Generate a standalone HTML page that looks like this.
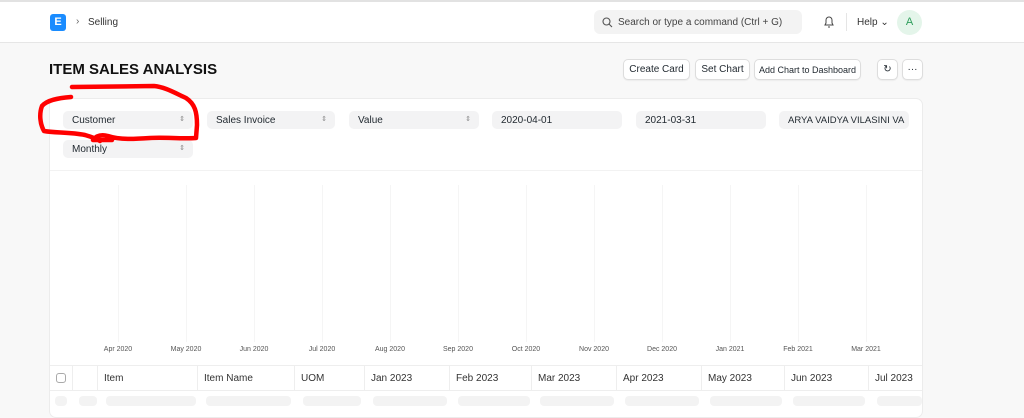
<!DOCTYPE html>
<html><head><style>
*{box-sizing:border-box;margin:0;padding:0}
body{width:1024px;height:403px;overflow:hidden;background:#f8f8f8;font-family:"Liberation Sans",sans-serif;color:#1f272e;position:relative}
.top{position:absolute;left:0;top:0;width:1024px;height:43px;background:#fff;border-top:2px solid #e2e2e2;border-bottom:1px solid #e6e6e6}
.abs{position:absolute;white-space:nowrap}
.btn{position:absolute;top:59px;height:21px;background:#fff;border:1px solid #ddd;border-radius:5px;font-size:10px;line-height:20px;text-align:center;white-space:nowrap;overflow:hidden;box-shadow:0 1px 1px rgba(0,0,0,.05)}
.card{position:absolute;left:49px;top:98px;width:874px;height:320px;background:#fff;border:1px solid #ececec;border-radius:7px}
.f{position:absolute;height:18px;background:#f3f3f4;border-radius:5px;font-size:10px;line-height:20px;padding-left:9px;color:#1f272e;white-space:nowrap;overflow:hidden}
.f span{position:absolute;right:8px;top:0;font-size:7px;color:#888;line-height:18px}
.gl{position:absolute;top:185px;width:1px;height:157px;background:#f5f5f5}
.lb{position:absolute;font-size:7px;color:#555;width:60px;text-align:center;line-height:9px;top:345px}
.th{position:absolute;top:366px;height:25px;border-right:1px solid #eee;font-size:10px;line-height:25px;padding-left:6px;color:#333;white-space:nowrap}
.ph{position:absolute;top:396px;height:10px;background:#f3f3f3;border-radius:4px}
</style></head><body>
<div class="top"></div>
<div class="abs" style="left:50px;top:14px;width:16px;height:17px;background:#1a8cff;border-radius:3px;color:#fff;font-size:11px;font-weight:bold;text-align:center;line-height:17px">E</div>
<div class="abs" style="left:76px;top:16px;font-size:10px;color:#666">›</div>
<div class="abs" style="left:88px;top:17px;font-size:10px;color:#333">Selling</div>
<div class="abs" style="left:594px;top:10px;width:208px;height:24px;background:#f3f3f3;border-radius:6px;font-size:10px;line-height:25px;padding-left:24px;color:#444">Search or type a command (Ctrl + G)</div>
<svg class="abs" style="left:602px;top:17px" width="11" height="11"><circle cx="4.5" cy="4.5" r="3.5" fill="none" stroke="#555" stroke-width="1.1"/><path d="M7 7l3 3" stroke="#555" stroke-width="1.1"/></svg>
<svg class="abs" style="left:823px;top:15px" width="12" height="14"><path d="M2 10h8l-1-2V5a3 3 0 0 0-6 0v3z M5 12h2" fill="none" stroke="#444" stroke-width="1"/></svg>
<div class="abs" style="left:846px;top:13px;width:1px;height:18px;background:#e5e5e5"></div>
<div class="abs" style="left:857px;top:17px;font-size:10px;color:#333">Help ⌄</div>
<div class="abs" style="left:897px;top:10px;width:25px;height:25px;border-radius:50%;background:#e4f5ea;color:#2e9e5b;font-size:11px;text-align:center;line-height:25px">A</div>
<div class="abs" style="left:49px;top:61px;font-size:15px;font-weight:bold;color:#111">ITEM SALES ANALYSIS</div>
<div class="btn" style="left:623px;width:67px">Create Card</div>
<div class="btn" style="left:695px;width:55px">Set Chart</div>
<div class="btn" style="left:754px;width:118px;width:107px;font-size:9px">Add Chart to Dashboard</div>
<div class="btn" style="left:877px;width:21px">↻</div>
<div class="btn" style="left:902px;width:21px">···</div>
<div class="card"></div>
<div class="f" style="left:63px;top:111px;width:130px">Customer<span>⇕</span></div>
<div class="f" style="left:207px;top:111px;width:128px">Sales Invoice<span>⇕</span></div>
<div class="f" style="left:349px;top:111px;width:130px">Value<span>⇕</span></div>
<div class="f" style="left:492px;top:111px;width:130px">2020-04-01</div>
<div class="f" style="left:636px;top:111px;width:130px">2021-03-31</div>
<div class="f" style="left:779px;top:111px;width:130px;font-size:9.5px">ARYA VAIDYA VILASINI VA</div>
<div class="f" style="left:63px;top:140px;width:130px">Monthly<span>⇕</span></div>
<div class="abs" style="left:50px;top:170px;width:872px;height:1px;background:#f2f2f2"></div>
<div class="gl" style="left:118px"></div><div class="gl" style="left:186px"></div><div class="gl" style="left:254px"></div><div class="gl" style="left:322px"></div><div class="gl" style="left:390px"></div><div class="gl" style="left:458px"></div><div class="gl" style="left:526px"></div><div class="gl" style="left:594px"></div><div class="gl" style="left:662px"></div><div class="gl" style="left:730px"></div><div class="gl" style="left:798px"></div><div class="gl" style="left:866px"></div>
<div class="lb" style="left:88px">Apr 2020</div><div class="lb" style="left:156px">May 2020</div><div class="lb" style="left:224px">Jun 2020</div><div class="lb" style="left:292px">Jul 2020</div><div class="lb" style="left:360px">Aug 2020</div><div class="lb" style="left:428px">Sep 2020</div><div class="lb" style="left:496px">Oct 2020</div><div class="lb" style="left:564px">Nov 2020</div><div class="lb" style="left:632px">Dec 2020</div><div class="lb" style="left:700px">Jan 2021</div><div class="lb" style="left:768px">Feb 2021</div><div class="lb" style="left:836px">Mar 2021</div>
<div class="abs" style="left:50px;top:365px;width:872px;height:1px;background:#eee"></div>
<div class="abs" style="left:50px;top:390px;width:872px;height:1px;background:#eee"></div>
<div class="th" style="left:50px;width:23px"><div style="width:10px;height:10px;border:1px solid #aaa;border-radius:3px;margin-top:7px"></div></div>
<div class="th" style="left:73px;width:25px"></div>
<div class="th" style="left:98px;width:100px">Item</div>
<div class="th" style="left:198px;width:97px">Item Name</div>
<div class="th" style="left:295px;width:70px">UOM</div>
<div class="th" style="left:365px;width:85px">Jan 2023</div>
<div class="th" style="left:450px;width:82px">Feb 2023</div>
<div class="th" style="left:532px;width:85px">Mar 2023</div>
<div class="th" style="left:617px;width:85px">Apr 2023</div>
<div class="th" style="left:702px;width:83px">May 2023</div>
<div class="th" style="left:785px;width:84px">Jun 2023</div>
<div class="th" style="left:869px;width:53px;border:none">Jul 2023</div>
<div class="ph" style="left:55px;width:12px"></div><div class="ph" style="left:79px;width:18px"></div><div class="ph" style="left:106px;width:90px"></div><div class="ph" style="left:206px;width:85px"></div><div class="ph" style="left:303px;width:58px"></div><div class="ph" style="left:373px;width:74px"></div><div class="ph" style="left:458px;width:72px"></div><div class="ph" style="left:540px;width:74px"></div><div class="ph" style="left:625px;width:74px"></div><div class="ph" style="left:710px;width:72px"></div><div class="ph" style="left:793px;width:72px"></div><div class="ph" style="left:877px;width:45px"></div>
<svg class="abs" style="left:0;top:0" width="240" height="160"><path d="M72 87 L154 86 C165 87 175 93 186 98 C195 104 197 112 197 125 L196 138 C180 139 165 137 150 138 C135 139 120 140 108 136 C100 134 96 136 93 140 L112 140 M71 97 C58 98 47 100 42 106 C39 114 40 124 44 131 C55 133 70 132 85 135 C92 137 97 139 100 141" fill="none" stroke="#f00" stroke-width="4.5" stroke-linecap="round" stroke-linejoin="round"/></svg>
</body></html>
